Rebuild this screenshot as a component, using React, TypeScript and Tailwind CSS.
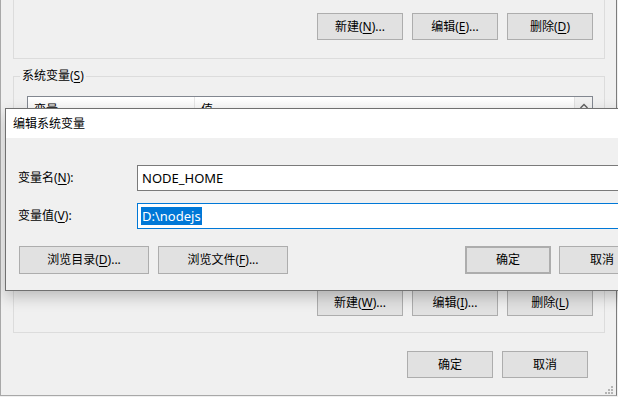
import type { ReactNode } from "react";

const font = "font-['Noto_Sans','Noto_Sans_CJK_SC',sans-serif]";

function Key({ children }: { children: ReactNode }) {
    return <span className="underline underline-offset-[2px] decoration-1">{children}</span>;
}

function Btn({ children, className = "" }: { children: ReactNode; className?: string }) {
    return (
        <button
            className={`h-[27px] w-[86px] bg-[#e1e1e1] border border-[#adadad] text-[12px] leading-[16px] text-black flex items-center justify-center ${className}`}
        >
            {children}
        </button>
    );
}

export default function App() {
    return (
        <div className={`w-[618px] h-[397px] bg-[#f0f0f0] relative overflow-hidden text-black ${font}`}>
            {/* ventana de variables de entorno (fondo) */}
            <div className="w-[617px] h-[396px] border-l border-b border-r border-l-[#a8a8a8] border-b-[#a8a8a8] border-r-[#7c7c7c] flex flex-col">
                <div className="ml-[12px] w-[592px] h-[59px] border-x border-b border-[#dcdcdc] flex justify-end items-start pt-[13px] pr-[11px] gap-[9px]">
                    <Btn>新建(<Key>N</Key>)...</Btn>
                    <Btn>编辑(<Key>E</Key>)...</Btn>
                    <Btn>删除(<Key>D</Key>)</Btn>
                </div>

                <fieldset className="ml-[12px] mt-[9px] w-[592px] border border-[#dcdcdc] p-0">
                    <legend className="ml-[6px] px-[2px] text-[12px] leading-[16px]">
                        系统变量(<Key>S</Key>)
                    </legend>
                    <div className="pl-[13px] pr-[11px] pt-[12px] pb-[16px] flex flex-col">
                        <div className="w-[566px] h-[180px] border border-[#828790] bg-white flex flex-col">
                            <div className="h-[24px] flex bg-gradient-to-b from-white to-[#f2f2f2] border-b border-[#e5e5e5] text-[12px] leading-[16px]">
                                <div className="w-[167px] border-r border-[#e5e5e5] pl-[6px] pt-[5px]">变量</div>
                                <div className="flex-1 pl-[6px] pt-[5px]">值</div>
                                <div className="w-[18px] border-l border-[#e0e0e0] bg-[#f0f0f0] flex justify-center pt-[6px]">
                                    <svg width="8" height="6" viewBox="0 0 8 6">
                                        <path d="M0.5 5 L4 1.5 L7.5 5" fill="none" stroke="#606060" strokeWidth="1.4" />
                                    </svg>
                                </div>
                            </div>
                        </div>
                        <div className="mt-[13px] flex justify-end gap-[9px]">
                            <Btn>新建(<Key>W</Key>)...</Btn>
                            <Btn>编辑(<Key>I</Key>)...</Btn>
                            <Btn>删除(<Key>L</Key>)</Btn>
                        </div>
                    </div>
                </fieldset>

                <div className="mt-[18px] flex justify-end gap-[9px] pr-[28px]">
                    <Btn>确定</Btn>
                    <Btn>取消</Btn>
                </div>
            </div>

            {/* asa de redimensionar */}
            <svg className="absolute left-[603px] top-[384px]" width="10" height="10" viewBox="0 0 10 10">
                <rect x="8" y="2" width="2" height="2" fill="#b4b4b4" />
                <rect x="5" y="5" width="2" height="2" fill="#b4b4b4" />
                <rect x="8" y="5" width="2" height="2" fill="#b4b4b4" />
                <rect x="2" y="8" width="2" height="2" fill="#b4b4b4" />
                <rect x="5" y="8" width="2" height="2" fill="#b4b4b4" />
                <rect x="8" y="8" width="2" height="2" fill="#b4b4b4" />
            </svg>

            {/* dialogo: editar variable del sistema */}
            <div className="absolute left-[5px] top-[108px] w-[654px] border border-[#707070] shadow-[0_6px_14px_rgba(0,0,0,0.22)] flex flex-col">
                <div className="h-[29px] bg-white pl-[7px] flex items-center text-[12px] leading-[16px]">
                    编辑系统变量
                </div>
                <div className="bg-[#f0f0f0] pt-[27px] pb-[16px] text-[12px] leading-[16px]">
                    <div className="flex items-center">
                        <label className="w-[131px] pl-[12px]">
                            变量名(<Key>N</Key>):
                        </label>
                        <div className="flex-1 h-[26px] bg-white border border-[#7a7a7a] flex items-center pl-[4px] text-[13px]">
                            NODE_HOME
                        </div>
                    </div>
                    <div className="flex items-center mt-[12px]">
                        <label className="w-[131px] pl-[12px]">
                            变量值(<Key>V</Key>):
                        </label>
                        <div className="flex-1 h-[26px] bg-white border border-[#0078d7] flex items-center pl-[3px] text-[13px]">
                            <span className="bg-[#0078d7] text-white leading-[18px] px-[1px]">D:\nodejs</span>
                        </div>
                    </div>
                    <div className="flex justify-between px-[13px] mt-[17px]">
                        <div className="flex gap-[9px]">
                            <Btn className="w-[130px] h-[28px]">浏览目录(<Key>D</Key>)...</Btn>
                            <Btn className="w-[130px] h-[28px]">浏览文件(<Key>F</Key>)...</Btn>
                        </div>
                        <div className="flex gap-[8px]">
                            <Btn className="h-[28px] border-2 border-[#0078d7]">确定</Btn>
                            <Btn className="h-[28px]">取消</Btn>
                        </div>
                    </div>
                </div>
            </div>
        </div>
    );
}
